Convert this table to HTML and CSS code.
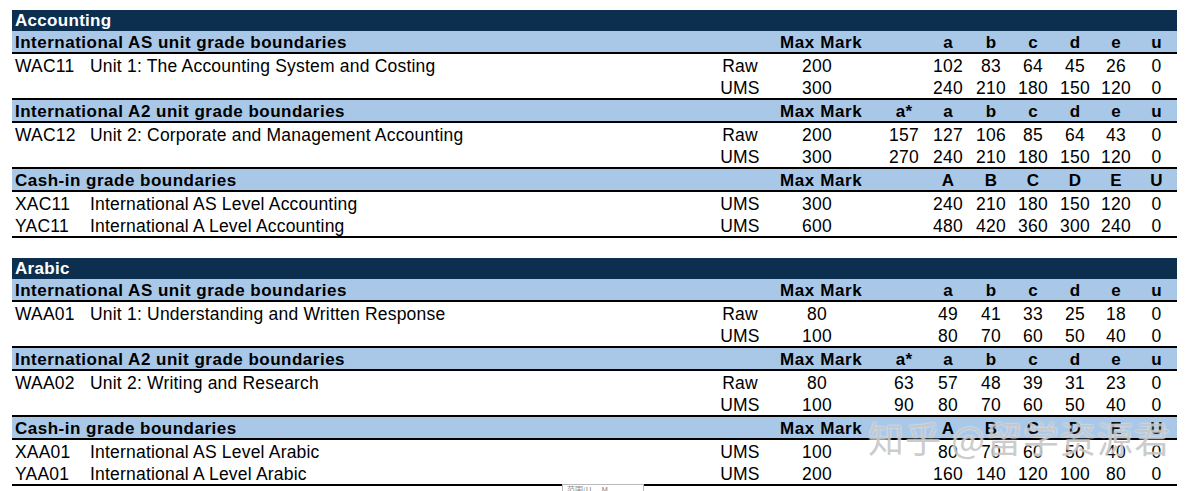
FILE: index.html
```html
<!DOCTYPE html>
<html>
<head>
<meta charset="utf-8">
<link rel="stylesheet" href="styles.css">
</head>
<body>
<div class="page">
  <section class="subject">
    <div class="subject-title">Accounting</div>
    <div class="row head">
      <div class="h-title">International AS unit grade boundaries</div>
      <div class="c mm">Max Mark</div><div class="c star"></div>
      <div class="c">a</div><div class="c">b</div><div class="c">c</div><div class="c">d</div><div class="c">e</div><div class="c">u</div>
    </div>
    <div class="row">
      <div class="code">WAC11</div><div class="title">Unit 1: The Accounting System and Costing</div><div class="c">Raw</div><div class="c">200</div><div class="c star"></div>
      <div class="c">102</div><div class="c">83</div><div class="c">64</div><div class="c">45</div><div class="c">26</div><div class="c">0</div>
    </div>
    <div class="row">
      <div class="code"></div><div class="title"></div><div class="c">UMS</div><div class="c">300</div><div class="c star"></div>
      <div class="c">240</div><div class="c">210</div><div class="c">180</div><div class="c">150</div><div class="c">120</div><div class="c">0</div>
    </div>
    <div class="row head sep">
      <div class="h-title">International A2 unit grade boundaries</div>
      <div class="c mm">Max Mark</div><div class="c star">a*</div>
      <div class="c">a</div><div class="c">b</div><div class="c">c</div><div class="c">d</div><div class="c">e</div><div class="c">u</div>
    </div>
    <div class="row">
      <div class="code">WAC12</div><div class="title">Unit 2: Corporate and Management Accounting</div><div class="c">Raw</div><div class="c">200</div><div class="c star">157</div>
      <div class="c">127</div><div class="c">106</div><div class="c">85</div><div class="c">64</div><div class="c">43</div><div class="c">0</div>
    </div>
    <div class="row">
      <div class="code"></div><div class="title"></div><div class="c">UMS</div><div class="c">300</div><div class="c star">270</div>
      <div class="c">240</div><div class="c">210</div><div class="c">180</div><div class="c">150</div><div class="c">120</div><div class="c">0</div>
    </div>
    <div class="row head sep cash">
      <div class="h-title">Cash-in grade boundaries</div>
      <div class="c mm">Max Mark</div><div class="c star"></div>
      <div class="c">A</div><div class="c">B</div><div class="c">C</div><div class="c">D</div><div class="c">E</div><div class="c">U</div>
    </div>
    <div class="row">
      <div class="code">XAC11</div><div class="title">International AS Level Accounting</div><div class="c">UMS</div><div class="c">300</div><div class="c star"></div>
      <div class="c">240</div><div class="c">210</div><div class="c">180</div><div class="c">150</div><div class="c">120</div><div class="c">0</div>
    </div>
    <div class="row last">
      <div class="code">YAC11</div><div class="title">International A Level Accounting</div><div class="c">UMS</div><div class="c">600</div><div class="c star"></div>
      <div class="c">480</div><div class="c">420</div><div class="c">360</div><div class="c">300</div><div class="c">240</div><div class="c">0</div>
    </div>
  </section>

  <section class="subject">
    <div class="subject-title">Arabic</div>
    <div class="row head">
      <div class="h-title">International AS unit grade boundaries</div>
      <div class="c mm">Max Mark</div><div class="c star"></div>
      <div class="c">a</div><div class="c">b</div><div class="c">c</div><div class="c">d</div><div class="c">e</div><div class="c">u</div>
    </div>
    <div class="row">
      <div class="code">WAA01</div><div class="title">Unit 1: Understanding and Written Response</div><div class="c">Raw</div><div class="c">80</div><div class="c star"></div>
      <div class="c">49</div><div class="c">41</div><div class="c">33</div><div class="c">25</div><div class="c">18</div><div class="c">0</div>
    </div>
    <div class="row">
      <div class="code"></div><div class="title"></div><div class="c">UMS</div><div class="c">100</div><div class="c star"></div>
      <div class="c">80</div><div class="c">70</div><div class="c">60</div><div class="c">50</div><div class="c">40</div><div class="c">0</div>
    </div>
    <div class="row head sep">
      <div class="h-title">International A2 unit grade boundaries</div>
      <div class="c mm">Max Mark</div><div class="c star">a*</div>
      <div class="c">a</div><div class="c">b</div><div class="c">c</div><div class="c">d</div><div class="c">e</div><div class="c">u</div>
    </div>
    <div class="row">
      <div class="code">WAA02</div><div class="title">Unit 2: Writing and Research</div><div class="c">Raw</div><div class="c">80</div><div class="c star">63</div>
      <div class="c">57</div><div class="c">48</div><div class="c">39</div><div class="c">31</div><div class="c">23</div><div class="c">0</div>
    </div>
    <div class="row">
      <div class="code"></div><div class="title"></div><div class="c">UMS</div><div class="c">100</div><div class="c star">90</div>
      <div class="c">80</div><div class="c">70</div><div class="c">60</div><div class="c">50</div><div class="c">40</div><div class="c">0</div>
    </div>
    <div class="row head sep cash">
      <div class="h-title">Cash-in grade boundaries</div>
      <div class="c mm">Max Mark</div><div class="c star"></div>
      <div class="c">A</div><div class="c">B</div><div class="c">C</div><div class="c">D</div><div class="c">E</div><div class="c">U</div>
    </div>
    <div class="row">
      <div class="code">XAA01</div><div class="title">International AS Level Arabic</div><div class="c">UMS</div><div class="c">100</div><div class="c star"></div>
      <div class="c">80</div><div class="c">70</div><div class="c">60</div><div class="c">50</div><div class="c">40</div><div class="c">0</div>
    </div>
    <div class="row last">
      <div class="code">YAA01</div><div class="title">International A Level Arabic</div><div class="c">UMS</div><div class="c">200</div><div class="c star"></div>
      <div class="c">160</div><div class="c">140</div><div class="c">120</div><div class="c">100</div><div class="c">80</div><div class="c">0</div>
    </div>
  </section>
</div>
<div class="watermark">知乎 @留学资源君</div>
<div class="tip">范围(U… M</div>
</body>
</html>
```
FILE: styles.css
```css
html, body {
  margin: 0;
  padding: 0;
  background: #ffffff;
}
body {
  font-family: "Liberation Sans", Arial, sans-serif;
  color: #000;
  position: relative;
  width: 1189px;
  height: 491px;
  overflow: hidden;
}
.page {
  padding: 10px 12px 0 12px;
  width: 1165px;
}
.subject + .subject {
  margin-top: 20px;
}
.subject-title {
  background: #0c2f4f;
  color: #fff;
  font-weight: bold;
  font-size: 17px;
  height: 21px;
  line-height: 22px;
  padding-left: 3px;
  letter-spacing: 0.3px;
}
.row {
  display: grid;
  grid-template-columns: 78px 610px 80px 74px 72px 44px 42px 42px 42px 40px 41px;
  height: 22px;
  line-height: 24px;
  font-size: 17.5px;
  letter-spacing: 0.2px;
  white-space: nowrap;
  overflow: hidden;
}
.row.head {
  background: #a9c8e8;
  font-weight: bold;
  font-size: 17px;
  height: 21px;
  line-height: 23px;
  border-bottom: 2px solid #000;
}
.row.sep {
  border-top: 2px solid #000;
}
.row.last {
  border-bottom: 2px solid #000;
}
.h-title {
  grid-column: 1 / 4;
  padding-left: 3px;
  letter-spacing: 0.5px;
}
.code {
  padding-left: 3px;
}
.c {
  text-align: center;
}
.mm {
  letter-spacing: 0.6px;
}
.star {
  padding-left: 28px;
}
.watermark {
  position: absolute;
  left: 868px;
  top: 413px;
  font-family: "Noto Sans CJK SC", sans-serif;
  font-size: 36px;
  line-height: 48px;
  color: rgba(185, 185, 185, 0.72);
  text-shadow: 0 0 2px rgba(255, 255, 255, 0.9);
  letter-spacing: 1px;
  white-space: nowrap;
}
.tip {
  position: absolute;
  left: 562px;
  top: 484px;
  width: 82px;
  height: 12px;
  border: 1px solid #bbb;
  background: #fff;
  font-family: "Noto Sans CJK SC", sans-serif;
  font-size: 8px;
  line-height: 10px;
  color: #888;
  padding-left: 4px;
  box-sizing: border-box;
}
```
